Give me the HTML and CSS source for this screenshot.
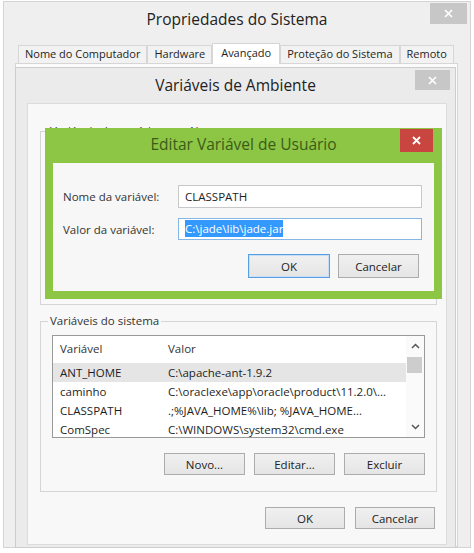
FILE: index.html
```html
<!DOCTYPE html>
<html lang="pt">
<head>
	<meta charset="UTF-8">
	<title>Variáveis de Ambiente</title>
	<link rel="stylesheet" href="styles.css">
</head>
<body>
	<div class="desk">

		<!-- janela de fundo -->
		<div class="win sys">
			<div class="titlebar">
				<span class="title">Propriedades do Sistema</span>
				<a class="close" href="javascript:;">
					<svg width="9" height="9" viewBox="0 0 9 9"><path d="M1 1L8 8M8 1L1 8" stroke="#fff" stroke-width="1.6"/></svg>
				</a>
			</div>
			<div class="client">
				<ul class="tabs">
					<li>Nome do Computador</li>
					<li>Hardware</li>
					<li class="on">Avançado</li>
					<li>Proteção do Sistema</li>
					<li>Remoto</li>
				</ul>
				<div class="tabpanel"></div>
			</div>
		</div>

		<!-- variaveis de ambiente -->
		<div class="win env">
			<div class="titlebar">
				<span class="title">Variáveis de Ambiente</span>
				<a class="close" href="javascript:;">
					<svg width="9" height="9" viewBox="0 0 9 9"><path d="M1 1L8 8M8 1L1 8" stroke="#fff" stroke-width="1.6"/></svg>
				</a>
			</div>
			<div class="client">
				<fieldset class="group user">
					<legend>Variáveis de usuário para Aluno</legend>
				</fieldset>

				<fieldset class="group">
					<legend>Variáveis do sistema</legend>
					<div class="list">
						<div class="rows">
							<div class="row head"><span>Variável</span><span>Valor</span></div>
							<div class="row sel"><span>ANT_HOME</span><span>C:\apache-ant-1.9.2</span></div>
							<div class="row"><span>caminho</span><span>C:\oraclexe\app\oracle\product\11.2.0\...</span></div>
							<div class="row"><span>CLASSPATH</span><span>.;%JAVA_HOME%\lib; %JAVA_HOME...</span></div>
							<div class="row"><span>ComSpec</span><span>C:\WINDOWS\system32\cmd.exe</span></div>
						</div>
						<div class="scroll">
							<div class="arrow">
								<svg width="9" height="6" viewBox="0 0 9 6"><path d="M1 5L4.5 1.5L8 5" fill="none" stroke="#555" stroke-width="1.5"/></svg>
							</div>
							<div class="track"><div class="thumb"></div></div>
							<div class="arrow">
								<svg width="9" height="6" viewBox="0 0 9 6"><path d="M1 1L4.5 4.5L8 1" fill="none" stroke="#555" stroke-width="1.5"/></svg>
							</div>
						</div>
					</div>
					<div class="btns">
						<a class="btn" href="javascript:;">Novo...</a>
						<a class="btn" href="javascript:;">Editar...</a>
						<a class="btn" href="javascript:;">Excluir</a>
					</div>
				</fieldset>

				<div class="footer">
					<a class="btn" href="javascript:;">OK</a>
					<a class="btn" href="javascript:;">Cancelar</a>
				</div>
			</div>
		</div>

		<!-- editar variavel -->
		<div class="win edit">
			<div class="titlebar">
				<span class="title">Editar Variável de Usuário</span>
				<a class="close" href="javascript:;">
					<svg width="9" height="9" viewBox="0 0 9 9"><path d="M1 1L8 8M8 1L1 8" stroke="#fff" stroke-width="1.8"/></svg>
				</a>
			</div>
			<div class="client">
				<div class="form">
					<label>Nome da variável:</label>
					<div class="field">CLASSPATH</div>
					<label>Valor da variável:</label>
					<div class="field focus"><span class="mark">C:\jade\lib\jade.jar</span></div>
				</div>
				<div class="actions">
					<a class="btn def" href="javascript:;">OK</a>
					<a class="btn" href="javascript:;">Cancelar</a>
				</div>
			</div>
		</div>

	</div>
</body>
</html>
```

FILE: styles.css
```css
*{
	margin: 0;
	padding: 0;
	box-sizing: border-box;
}
body{
	width: 474px;
	height: 553px;
	overflow: hidden;
	background: #fff;
	font-family: "Open Sans", "Noto Sans", sans-serif;
	font-size: 11.5px;
	color: #1e1e1e;
}
a{
	color: inherit;
	text-decoration: none;
}
.desk{
	position: relative;
	width: 474px;
	height: 553px;
}

/* janelas */
.win{
	position: absolute;
	display: flex;
	flex-direction: column;
}
.titlebar{
	display: grid;
	grid-template-columns: 1fr auto 1fr;
	align-items: start;
	flex: none;
}
.titlebar .title{
	grid-column: 2;
	font-size: 15.5px;
	line-height: 20px;
	color: #222;
	white-space: nowrap;
}
.titlebar .close{
	grid-column: 3;
	justify-self: end;
	display: flex;
	align-items: center;
	justify-content: center;
	background: #c7c7c7;
}

.sys{
	left: 3px;
	top: 1px;
	width: 468px;
	height: 547px;
	background: #efefef;
	border: 1px solid #d4d4d4;
}
.sys .titlebar{
	height: 36px;
}
.sys .title{
	margin-top: 7px;
}
.sys .close{
	width: 37px;
	height: 21px;
	margin: 1px 3px 0 0;
}
.sys .client{
	flex: 1;
	display: flex;
	flex-direction: column;
	padding: 5px 12px 0 11px;
}
.tabs{
	list-style: none;
	display: flex;
	align-items: flex-end;
	height: 20px;
	padding-left: 3px;
	position: relative;
	z-index: 1;
	font-size: 11px;
}
.tabs li{
	height: 18px;
	line-height: 16px;
	padding: 0 6px;
	border: 1px solid #d6d6d6;
	border-bottom: none;
	background: #f2f2f2;
	white-space: nowrap;
}
.tabs li.on{
	height: 21px;
	margin-bottom: -1px;
	padding: 1px 8px 0;
	background: #fff;
}
.tabpanel{
	flex: 1;
	border: 1px solid #d6d6d6;
	background: #fbfbfb;
}

.env{
	left: 15px;
	top: 67px;
	width: 441px;
	height: 481px;
	background: #ebebeb;
	border: 1px solid #cdcdcd;
	z-index: 2;
}
.env .titlebar{
	height: 35px;
}
.env .title{
	margin-top: 7px;
}
.env .close{
	width: 35px;
	height: 20px;
	margin: 2px 5px 0 0;
}
.env .client{
	flex: 1;
	margin: 0 8px 2px 11px;
	padding: 0 9px 0 12px;
	background: #f8f8f8;
	border: 1px solid #dcdcdc;
}

.group{
	border: 1px solid #d5d5d5;
	padding: 6px 11px 16px;
}
.group legend{
	margin-left: -4px;
	padding: 0 2px;
	line-height: 16px;
	color: #333;
}
.group.user{
	margin-top: 19px;
	height: 182px;
}
.group.user + .group{
	margin-top: 8px;
}

.list{
	display: flex;
	height: 103px;
	border: 1px solid #999;
	background: #fff;
}
.rows{
	flex: 1;
	overflow: hidden;
}
.row{
	display: grid;
	grid-template-columns: 108px 1fr;
	height: 19px;
	line-height: 19px;
	padding-left: 7px;
	white-space: nowrap;
}
.row.head{
	height: 27px;
	line-height: 26px;
	color: #333;
}
.row.sel{
	background: #e5e5e5;
}
.scroll{
	width: 18px;
	display: flex;
	flex-direction: column;
	background: #fafafa;
}
.scroll .arrow{
	height: 20px;
	display: flex;
	align-items: center;
	justify-content: center;
}
.scroll .track{
	flex: 1;
	padding: 1px 2px 0 1px;
}
.scroll .thumb{
	height: 16px;
	background: #cdcdcd;
}

.btn{
	display: flex;
	align-items: center;
	justify-content: center;
	height: 22px;
	border: 1px solid #acacac;
	background: linear-gradient(#f0f0f0, #e5e5e5);
	color: #222;
}
.btns{
	display: flex;
	justify-content: flex-end;
	gap: 9px;
	margin-top: 15px;
}
.btns .btn{
	width: 81px;
}
.footer{
	display: flex;
	justify-content: flex-end;
	gap: 10px;
	margin-top: 15px;
	padding-right: 2px;
}
.footer .btn{
	width: 80px;
}

.edit{
	left: 45px;
	top: 128px;
	width: 397px;
	height: 171px;
	padding: 0 8px 8px;
	background: #8dc545;
	z-index: 3;
}
.edit .titlebar{
	height: 35px;
}
.edit .title{
	margin-top: 6px;
	color: #3a5c18;
}
.edit .close{
	width: 33px;
	height: 23px;
	margin: 1px 1px 0 0;
	background: #c9453f;
}
.edit .client{
	flex: 1;
	padding: 22px 12px 0 10px;
	background: #f7f7f7;
}
.form{
	display: grid;
	grid-template-columns: 115px 244px;
	row-gap: 10px;
	align-items: center;
}
.form label{
	color: #333;
}
.field{
	height: 23px;
	line-height: 21px;
	padding-left: 6px;
	border: 1px solid #c8c8c8;
	background: #fff;
}
.field.focus{
	height: 22px;
	line-height: 20px;
	border-color: #86b6e6;
}
.mark{
	background: #3399ff;
	color: #fff;
	padding: 1px 0;
}
.actions{
	display: flex;
	justify-content: flex-end;
	gap: 8px;
	margin-top: 14px;
	padding-right: 3px;
}
.actions .btn{
	width: 81px;
	height: 24px;
}
.actions .btn.def{
	width: 82px;
	border-color: #5a9fe0;
	box-shadow: inset 0 0 0 1px #c5dff6;
}
```
